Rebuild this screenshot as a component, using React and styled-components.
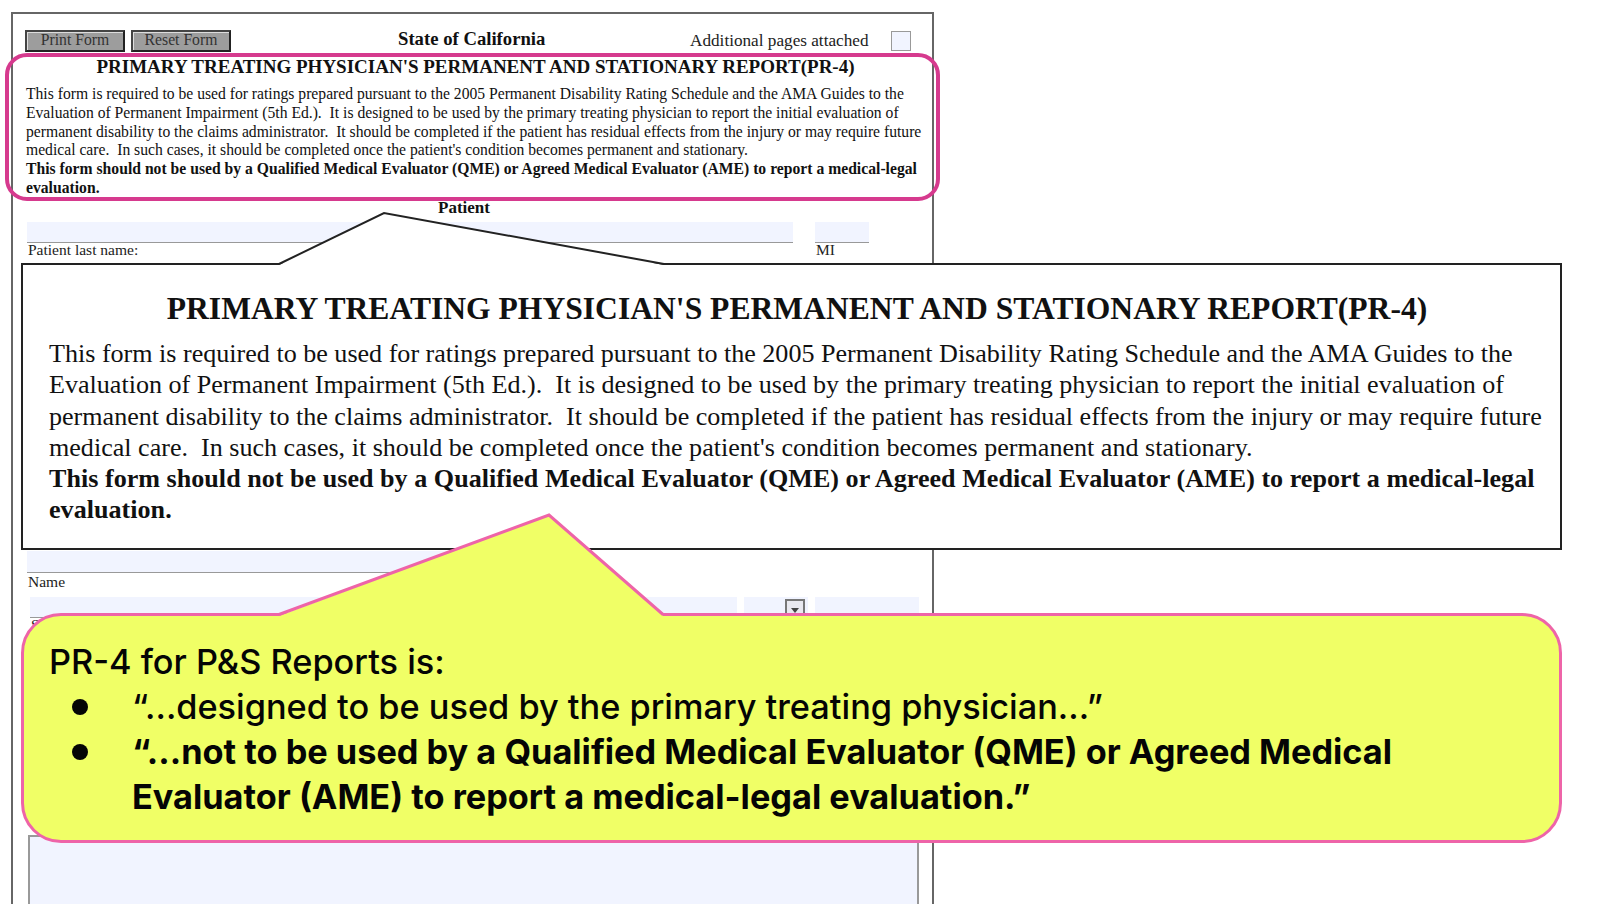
import React from 'react'
import styled, { createGlobalStyle } from 'styled-components'

const GlobalStyle = createGlobalStyle`
    html, body {
        margin: 0;
        padding: 0;
        background: #fff;
    }
`

const serif = `"Liberation Serif", "Times New Roman", serif`

const Canvas = styled.div`
    position: relative;
    width: 1600px;
    height: 904px;
    overflow: hidden;
    background: #fff;
    padding: 12px 0 0 11px;
    box-sizing: border-box;
    font-family: ${serif};
    color: #111;
`

const FormPage = styled.div`
    width: 923px;
    height: 1000px;
    box-sizing: border-box;
    border: 2px solid #666;
`

const TopBar = styled.div`
    display: flex;
    align-items: flex-start;
    height: 39px;
    padding: 16px 0 0 12px;
    box-sizing: border-box;
`

const FormButton = styled.div`
    width: 100px;
    height: 22px;
    margin-right: 6px;
    box-sizing: border-box;
    border: 2px solid #222;
    border-left-color: #444;
    border-top-color: #444;
    background: #9d9d9d;
    box-shadow: inset 1px 1px 0 #ddd;
    font-size: 15.7px;
    line-height: 16px;
    text-align: center;
    color: #333;
`

const StateTitle = styled.div`
    width: 292px;
    margin-left: 161px;
    font-size: 18.7px;
    font-weight: bold;
    line-height: 18px;
`

const AttachLabel = styled.div`
    width: 201px;
    padding-top: 2px;
    font-size: 17.2px;
    line-height: 18px;
    color: #222;
`

const Checkbox = styled.div`
    width: 20px;
    height: 20px;
    box-sizing: border-box;
    border: 1px solid #999;
    background: #f1f4ff;
    margin-top: 1px;
`

const Notice = styled.div`
    margin: 0 -8px;
    height: 148px;
    box-sizing: border-box;
    border: 4px solid #d63a8e;
    border-radius: 22px;
    padding: 0 0 0 17px;
    white-space: pre;
`

const NoticeTitle = styled.div`
    font-size: ${p => p.$size}px;
    font-weight: bold;
    text-align: center;
    line-height: ${p => p.$height}px;
    margin: 0 ${p => p.$inset}px ${p => p.$gap}px 0;
`

const NoticeBody = styled.div`
    font-size: ${p => p.$size}px;
    line-height: ${p => p.$height}px;
`

const Strong = styled.div`
    font-weight: bold;
    letter-spacing: 0.0009em;
`

const SectionTitle = styled.div`
    height: 21px;
    padding-left: 425px;
    font-size: 17px;
    font-weight: bold;
    line-height: 14px;
`

const FieldRow = styled.div`
    display: flex;
    margin-top: ${p => p.$top || 0}px;
    padding-left: ${p => p.$left || 14}px;
`

const Field = styled.div`
    width: ${p => p.$width}px;
    margin-right: ${p => p.$gap || 0}px;
    font-size: 15.5px;
    line-height: 14px;
    color: #222;
`

const FieldInput = styled.div`
    position: relative;
    height: ${p => p.$height || 20}px;
    background: #f1f4ff;
    border-bottom: 1px solid ${p => (p.$plain ? 'transparent' : '#999')};
    margin-bottom: ${p => p.$gap || 0}px;
`

const FieldLabel = styled.div`
    padding-left: 1px;
`

const DropButton = styled.div`
    position: absolute;
    top: 2px;
    right: 3px;
    width: 20px;
    height: 18px;
    box-sizing: border-box;
    border: 2px solid #777;
    background: #e9e9f0;
    &::after {
        content: '';
        position: absolute;
        left: 4px;
        top: 7px;
        border: 4px solid transparent;
        border-top: 5px solid #444;
    }
`

const TextArea = styled.div`
    margin: 203px 0 0 15px;
    width: 891px;
    height: 200px;
    box-sizing: border-box;
    background: #f1f4ff;
    border: 2px solid #999;
`

const Callout = styled.div`
    position: absolute;
    left: 21px;
    top: ${p => p.$top}px;
    width: 1541px;
    height: ${p => p.$height}px;
    box-sizing: border-box;
`

const ZoomBox = styled.div`
    height: 100%;
    box-sizing: border-box;
    background: #fff;
    border: 2px solid #222;
    padding: 26px 0 0 26px;
    white-space: pre;
`

const NoteBox = styled.div`
    height: 100%;
    box-sizing: border-box;
    background: #f0ff66;
    border: 3px solid #ee64a8;
    border-radius: 40px;
    padding: 23px 0 0 25px;
    font-family: Inter, Lato, sans-serif;
    font-weight: 500;
    font-size: 34.3px;
    line-height: 45px;
    color: #050505;
`

const NoteList = styled.ul`
    list-style: none;
    margin: 0;
    padding: 0;
`

const NoteItem = styled.li`
    position: relative;
    padding-left: 83px;
    &::before {
        content: '';
        position: absolute;
        left: 23px;
        top: 15px;
        width: 16px;
        height: 16px;
        border-radius: 50%;
        background: #050505;
    }
`

const Bold = styled.b`
    font-weight: 700;
`

const Tail = styled.svg`
    position: absolute;
    left: 0;
    top: 0;
    overflow: visible;
`

const noticeLines = [
    'This form is required to be used for ratings prepared pursuant to the 2005 Permanent Disability Rating Schedule and the AMA Guides to the',
    'Evaluation of Permanent Impairment (5th Ed.).  It is designed to be used by the primary treating physician to report the initial evaluation of',
    'permanent disability to the claims administrator.  It should be completed if the patient has residual effects from the injury or may require future',
    "medical care.  In such cases, it should be completed once the patient's condition becomes permanent and stationary.",
]

const noticeBold = [
    'This form should not be used by a Qualified Medical Evaluator (QME) or Agreed Medical Evaluator (AME) to report a medical-legal',
    'evaluation.',
]

const reportTitle = "PRIMARY TREATING PHYSICIAN'S PERMANENT AND STATIONARY REPORT(PR-4)"

const NoticeText = ({ size, height }) => (
    <NoticeBody $size={size} $height={height}>
        {noticeLines.map(line => <div key={line}>{line}</div>)}
        <Strong>
            {noticeBold.map(line => <div key={line}>{line}</div>)}
        </Strong>
    </NoticeBody>
)

const App = () => {
    return (
        <Canvas>
            <GlobalStyle />
            <FormPage>
                <TopBar>
                    <FormButton>Print Form</FormButton>
                    <FormButton>Reset Form</FormButton>
                    <StateTitle>State of California</StateTitle>
                    <AttachLabel>Additional pages attached</AttachLabel>
                    <Checkbox />
                </TopBar>
                <Notice>
                    <NoticeTitle $size={19} $height={19} $gap={9} $inset={11}>{reportTitle}</NoticeTitle>
                    <NoticeText size={15.65} height={18.75} />
                </Notice>
                <SectionTitle>Patient</SectionTitle>
                <FieldRow>
                    <Field $width={766} $gap={22}>
                        <FieldInput />
                        <FieldLabel>Patient last name:</FieldLabel>
                    </Field>
                    <Field $width={54}>
                        <FieldInput />
                        <FieldLabel>MI</FieldLabel>
                    </Field>
                </FieldRow>
                <FieldRow $top={294}>
                    <Field $width={500}>
                        <FieldInput $height={21} $gap={2} />
                        <FieldLabel>Name</FieldLabel>
                    </Field>
                </FieldRow>
                <FieldRow $top={8} $left={17}>
                    <Field $width={707} $gap={7}>
                        <FieldInput />
                        <FieldLabel>Street address</FieldLabel>
                    </Field>
                    <Field $width={64} $gap={7}>
                        <FieldInput $plain>
                            <DropButton />
                        </FieldInput>
                    </Field>
                    <Field $width={104}>
                        <FieldInput $plain />
                    </Field>
                </FieldRow>
                <TextArea />
            </FormPage>

            <Callout $top={263} $height={287}>
                <ZoomBox>
                    <NoticeTitle $size={31.6} $height={36} $gap={11} $inset={15}>{reportTitle}</NoticeTitle>
                    <NoticeText size={26.08} height={31.3} />
                </ZoomBox>
                <Tail width="1" height="1">
                    <polygon points="258,2 363,-50 643,2" fill="#fff" />
                    <polyline points="258,1 363,-50 643,1" fill="none" stroke="#222" strokeWidth="2" />
                </Tail>
            </Callout>

            <Callout $top={613} $height={230}>
                <NoteBox>
                    <div>PR-4 for P&amp;S Reports is:</div>
                    <NoteList>
                        <NoteItem>“...designed to be used by the primary treating physician...”</NoteItem>
                        <NoteItem>
                            <Bold>“...not to be used by a Qualified Medical Evaluator (QME) or Agreed Medical<br />Evaluator (AME) to report a medical-legal evaluation.”</Bold>
                        </NoteItem>
                    </NoteList>
                </NoteBox>
                <Tail width="1" height="1">
                    <polygon points="258,3 528,-98 642,3" fill="#f0ff66" />
                    <polyline points="258,1.5 528,-98 642,1.5" fill="none" stroke="#ee64a8" strokeWidth="3" />
                </Tail>
            </Callout>
        </Canvas>
    )
}

export default App
